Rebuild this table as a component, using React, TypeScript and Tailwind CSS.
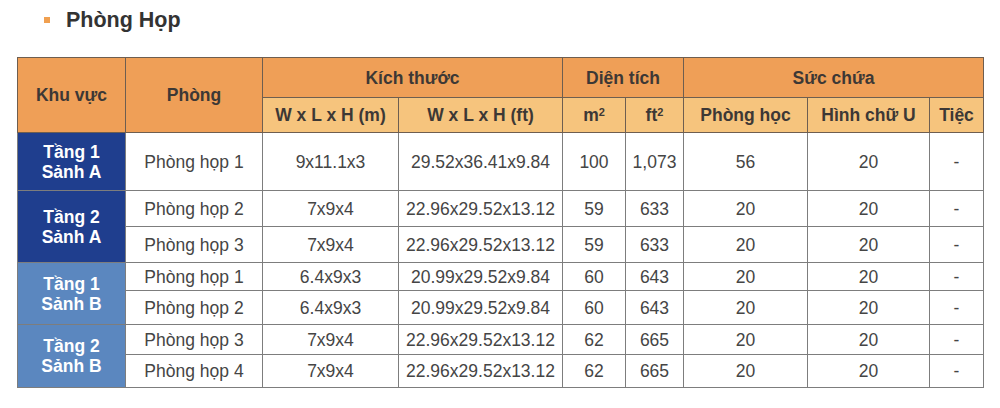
import React from 'react';

// Bảng phòng họp
type Room = {
  name: string;
  m: string;
  ft: string;
  m2: string;
  ft2: string;
  classroom: string;
  ushape: string;
  banquet: string;
  h: string;
};

type Group = {
  line1: string;
  line2: string;
  dark: boolean;
  rooms: Room[];
};

const groups: Group[] = [
  {
    line1: 'Tầng 1',
    line2: 'Sảnh A',
    dark: true,
    rooms: [
      { name: 'Phòng họp 1', m: '9x11.1x3', ft: '29.52x36.41x9.84', m2: '100', ft2: '1,073', classroom: '56', ushape: '20', banquet: '-', h: 'h-[58px]' },
    ],
  },
  {
    line1: 'Tầng 2',
    line2: 'Sảnh A',
    dark: true,
    rooms: [
      { name: 'Phòng họp 2', m: '7x9x4', ft: '22.96x29.52x13.12', m2: '59', ft2: '633', classroom: '20', ushape: '20', banquet: '-', h: 'h-[36px]' },
      { name: 'Phòng họp 3', m: '7x9x4', ft: '22.96x29.52x13.12', m2: '59', ft2: '633', classroom: '20', ushape: '20', banquet: '-', h: 'h-[36px]' },
    ],
  },
  {
    line1: 'Tầng 1',
    line2: 'Sảnh B',
    dark: false,
    rooms: [
      { name: 'Phòng họp 1', m: '6.4x9x3', ft: '20.99x29.52x9.84', m2: '60', ft2: '643', classroom: '20', ushape: '20', banquet: '-', h: 'h-[28px]' },
      { name: 'Phòng họp 2', m: '6.4x9x3', ft: '20.99x29.52x9.84', m2: '60', ft2: '643', classroom: '20', ushape: '20', banquet: '-', h: 'h-[34px]' },
    ],
  },
  {
    line1: 'Tầng 2',
    line2: 'Sảnh B',
    dark: false,
    rooms: [
      { name: 'Phòng họp 3', m: '7x9x4', ft: '22.96x29.52x13.12', m2: '62', ft2: '665', classroom: '20', ushape: '20', banquet: '-', h: 'h-[30px]' },
      { name: 'Phòng họp 4', m: '7x9x4', ft: '22.96x29.52x13.12', m2: '62', ft2: '665', classroom: '20', ushape: '20', banquet: '-', h: 'h-[33px]' },
    ],
  },
];

const th1 = 'border border-[#6e5e50] bg-[#ef9f57] text-[#3d3835] font-bold text-center align-middle p-0';
const th2 = 'border border-[#6e5e50] bg-[#f6c47d] text-[#3d3835] font-bold text-center align-middle p-0';
const td = 'border border-[#7d7d7d] text-center align-middle text-[#454545] p-0';

export default function App() {
  return (
    <div className="w-[1000px] h-[408px] bg-white font-['Liberation_Sans',Arial,sans-serif]">
      <div className="flex items-center pt-[8px] pl-[44px]">
        <span className="w-[6px] h-[6px] bg-[#f0a050] mr-[16px]" />
        <h2 className="text-[21.5px] leading-[24px] font-bold text-[#333333]">Phòng Họp</h2>
      </div>

      <div className="pl-[17px] pt-[25px]">
        <table className="table-fixed border-collapse w-[966px] text-[17.5px] leading-[20px]">
          <colgroup>
            <col className="w-[108px]" />
            <col className="w-[137px]" />
            <col className="w-[136px]" />
            <col className="w-[164px]" />
            <col className="w-[63px]" />
            <col className="w-[58px]" />
            <col className="w-[124px]" />
            <col className="w-[122px]" />
            <col className="w-[54px]" />
          </colgroup>
          <thead>
            <tr className="h-[40px]">
              <th rowSpan={2} className={th1}>Khu vực</th>
              <th rowSpan={2} className={th1}>Phòng</th>
              <th colSpan={2} className={th1}>Kích thước</th>
              <th colSpan={2} className={th1}>Diện tích</th>
              <th colSpan={3} className={th1}>Sức chứa</th>
            </tr>
            <tr className="h-[35px]">
              <th className={th2}>W x L x H (m)</th>
              <th className={th2}>W x L x H (ft)</th>
              <th className={th2}>m<sup className="text-[11px]">2</sup></th>
              <th className={th2}>ft<sup className="text-[11px]">2</sup></th>
              <th className={th2}>Phòng học</th>
              <th className={th2}>Hình chữ U</th>
              <th className={th2}>Tiệc</th>
            </tr>
          </thead>
          <tbody>
            {groups.map((g, gi) =>
              g.rooms.map((r, ri) => (
                <tr key={`${gi}-${ri}`} className={r.h}>
                  {ri === 0 && (
                    <td
                      rowSpan={g.rooms.length}
                      className={`border border-[#7d7d7d] text-center align-middle font-bold text-white p-0 ${
                        g.dark ? 'bg-[#1f3e8e]' : 'bg-[#5b87bf]'
                      }`}
                    >
                      {g.line1}
                      <br />
                      {g.line2}
                    </td>
                  )}
                  <td className={td}>{r.name}</td>
                  <td className={td}>{r.m}</td>
                  <td className={td}>{r.ft}</td>
                  <td className={td}>{r.m2}</td>
                  <td className={td}>{r.ft2}</td>
                  <td className={td}>{r.classroom}</td>
                  <td className={td}>{r.ushape}</td>
                  <td className={td}>{r.banquet}</td>
                </tr>
              ))
            )}
          </tbody>
        </table>
      </div>
    </div>
  );
}
